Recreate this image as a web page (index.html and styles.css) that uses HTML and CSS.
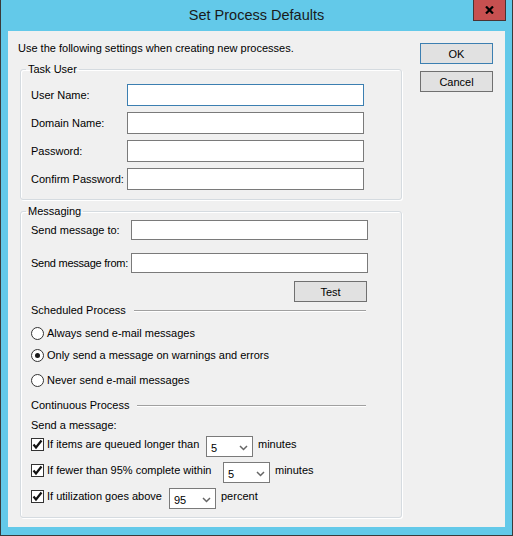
FILE: index.html
```html
<!DOCTYPE html>
<html lang="en">
<head>
  <meta charset="UTF-8">
  <title>Set Process Defaults</title>
  <link rel="stylesheet" href="styles.css">
</head>
<body>
  <div class="window">
    <div class="titlebar">
      <div class="title">Set Process Defaults</div>
      <div class="close">
        <svg width="9" height="8" viewBox="0 0 9 8"><path d="M1 0.5 L8 7.5 M8 0.5 L1 7.5" stroke="#000" stroke-width="2.2" fill="none"/></svg>
      </div>
    </div>

    <div class="client">
      <div class="main">
        <div class="intro">Use the following settings when creating new processes.</div>

        <fieldset class="group task-user">
          <legend>Task User</legend>
          <div class="form-grid">
            <label>User Name:</label>
            <input type="text" class="field focused">
            <label>Domain Name:</label>
            <input type="text" class="field">
            <label>Password:</label>
            <input type="password" class="field">
            <label>Confirm Password:</label>
            <input type="password" class="field">
          </div>
        </fieldset>

        <fieldset class="group messaging">
          <legend>Messaging</legend>
          <div class="msg-row">
            <label>Send message to:</label>
            <input type="text" class="field short">
          </div>
          <div class="msg-row from">
            <label class="tight">Send message from:</label>
            <input type="text" class="field short">
          </div>
          <div class="test-row">
            <button class="btn">Test</button>
          </div>

          <div class="section-head">
            <span>Scheduled Process</span>
            <div class="rule"></div>
          </div>
          <div class="radio-row r1"><span class="radio"></span>Always send e-mail messages</div>
          <div class="radio-row r2"><span class="radio checked"></span>Only send a message on warnings and errors</div>
          <div class="radio-row r3"><span class="radio"></span>Never send e-mail messages</div>

          <div class="section-head continuous">
            <span>Continuous Process</span>
            <div class="rule"></div>
          </div>
          <div class="send-label">Send a message:</div>

          <div class="check-row first">
            <span class="check"><svg width="11" height="11" viewBox="0 0 11 11"><path d="M1.5 5.5 L4 8.5 L9.5 1.5" stroke="#111" stroke-width="2.2" fill="none"/></svg></span>
            <span class="check-text queued">If items are queued longer than</span>
            <div class="combo"><span>5</span><svg width="9" height="6" viewBox="0 0 9 6"><path d="M1 1 L4.5 4.5 L8 1" stroke="#666" stroke-width="1.5" fill="none"/></svg></div>
            <span class="unit">minutes</span>
          </div>
          <div class="check-row">
            <span class="check"><svg width="11" height="11" viewBox="0 0 11 11"><path d="M1.5 5.5 L4 8.5 L9.5 1.5" stroke="#111" stroke-width="2.2" fill="none"/></svg></span>
            <span class="check-text fewer">If fewer than 95% complete within</span>
            <div class="combo"><span>5</span><svg width="9" height="6" viewBox="0 0 9 6"><path d="M1 1 L4.5 4.5 L8 1" stroke="#666" stroke-width="1.5" fill="none"/></svg></div>
            <span class="unit">minutes</span>
          </div>
          <div class="check-row">
            <span class="check"><svg width="11" height="11" viewBox="0 0 11 11"><path d="M1.5 5.5 L4 8.5 L9.5 1.5" stroke="#111" stroke-width="2.2" fill="none"/></svg></span>
            <span class="check-text util">If utilization goes above</span>
            <div class="combo"><span>95</span><svg width="9" height="6" viewBox="0 0 9 6"><path d="M1 1 L4.5 4.5 L8 1" stroke="#666" stroke-width="1.5" fill="none"/></svg></div>
            <span class="unit">percent</span>
          </div>
        </fieldset>
      </div>

      <div class="buttons">
        <button class="btn default">OK</button>
        <button class="btn">Cancel</button>
      </div>
    </div>
  </div>
</body>
</html>
```

FILE: styles.css
```css
body {
  margin: 0;
  font-family: "Liberation Sans", Arial, sans-serif;
  font-size: 11px;
  color: #000;
  background-color: #f0f0f0;
}
.window {
  width: 513px;
  height: 536px;
  box-sizing: border-box;
  background-color: #63c9e9;
  border: 1px solid #3a3a3a;
  border-top: none;
}
.titlebar {
  position: relative;
  height: 31px;
}
.title {
  text-align: center;
  font-size: 14.5px;
  line-height: 31px;
  color: #1a1a1a;
}
.close {
  position: absolute;
  top: 0;
  right: 6px;
  width: 33px;
  height: 21px;
  box-sizing: border-box;
  background-color: #c75050;
  border: 1px solid #4a3333;
  border-top: none;
  display: flex;
  align-items: center;
  justify-content: center;
}
.client {
  margin: 0 7px;
  height: 496px;
  box-sizing: border-box;
  background-color: #f0f0f0;
  padding: 11px 0 0 10px;
  display: flex;
}
.main {
  width: 384px;
}
.intro {
  line-height: 13px;
}
.group {
  width: 382px;
  box-sizing: border-box;
  margin: 0 0 0 2px;
  min-width: 0;
  border: 1px solid #d5dbe0;
  border-radius: 3px;
  box-shadow: inset 1px 1px 0 #fff, 1px 1px 0 #fff;
}
.group legend {
  padding: 0 2px;
  margin-left: -5px;
  line-height: 13px;
}
.task-user {
  margin-top: 8px;
  padding: 8px 37px 9px 10px;
}
.messaging {
  margin-top: 5px;
  padding: 2px 33px 8px 10px;
}
.form-grid {
  display: grid;
  grid-template-columns: 96px 237px;
  row-gap: 6px;
  align-items: center;
}
label {
  white-space: nowrap;
}
label.tight {
  letter-spacing: -0.25px;
}
.field {
  height: 22px;
  width: 237px;
  box-sizing: border-box;
  margin: 0;
  border: 1px solid #7a7a7a;
  background: #fff;
  font: inherit;
}
.field.focused {
  border-color: #3c7fb1;
}
.field.short {
  height: 20px;
}
.msg-row {
  display: flex;
  align-items: center;
}
.msg-row label {
  width: 100px;
  flex-shrink: 0;
}
.msg-row.from {
  margin-top: 13px;
}
.test-row {
  display: flex;
  justify-content: flex-end;
  margin-top: 8px;
  padding-right: 1px;
}
.btn {
  width: 73px;
  height: 21px;
  box-sizing: border-box;
  margin: 0;
  padding: 0;
  background-color: #e1e1e1;
  border: 1px solid #707070;
  font: inherit;
  color: #000;
}
.btn.default {
  border-color: #3c7fb1;
}
.section-head {
  display: flex;
  align-items: center;
  margin-top: 2px;
  line-height: 13px;
}
.section-head.continuous {
  margin-top: 11px;
}
.rule {
  flex: 1;
  margin: 0 2px 0 8px;
  border-top: 1px solid #a0a0a0;
  border-bottom: 1px solid #fff;
}
.radio-row {
  display: flex;
  align-items: center;
  height: 16px;
}
.radio-row.r1 { margin-top: 8px; }
.radio-row.r2 { margin-top: 6px; }
.radio-row.r3 { margin-top: 9px; }
.radio {
  width: 13px;
  height: 13px;
  box-sizing: border-box;
  border: 1px solid #333;
  border-radius: 50%;
  background: #fff;
  margin-right: 3px;
  display: flex;
  align-items: center;
  justify-content: center;
}
.radio.checked::after {
  content: "";
  width: 5px;
  height: 5px;
  border-radius: 50%;
  background: #1a1a1a;
}
.send-label {
  margin-top: 7px;
  line-height: 13px;
}
.check-row {
  display: flex;
  align-items: flex-start;
  height: 21px;
  margin-top: 5px;
}
.check-row.first {
  margin-top: 4px;
}
.check {
  width: 13px;
  height: 13px;
  box-sizing: border-box;
  border: 1px solid #333;
  background: #fff;
  margin-top: 2px;
  margin-right: 3px;
  display: flex;
  align-items: center;
  justify-content: center;
}
.check-text {
  margin-top: 2px;
  line-height: 13px;
}
.check-text.queued { width: 159px; }
.check-text.fewer { width: 176px; }
.check-text.util { width: 122px; }
.combo {
  width: 47px;
  height: 21px;
  box-sizing: border-box;
  border: 1px solid #7a7a7a;
  background: #fff;
  display: flex;
  align-items: center;
  justify-content: space-between;
  padding: 2px 4px 0 4px;
}
.unit {
  margin: 2px 0 0 5px;
  line-height: 13px;
}
.buttons {
  margin: 1px 0 0 18px;
  display: flex;
  flex-direction: column;
  gap: 7px;
}
```
